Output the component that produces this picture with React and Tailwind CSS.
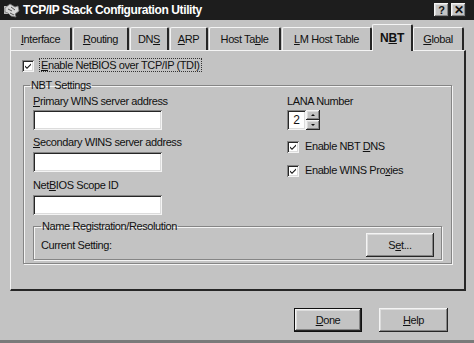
import React from 'react'

const raised = 'shadow-[inset_-1px_-1px_0_#262626,inset_1px_1px_0_#f4f4f4,inset_-2px_-2px_0_#858585,inset_2px_2px_0_#dcdcdc]'
const sunken = 'shadow-[inset_1px_1px_0_#858585,inset_-1px_-1px_0_#f4f4f4,inset_2px_2px_0_#262626,inset_-2px_-2px_0_#dcdcdc]'

function U({ children }) {
  return <span className="underline underline-offset-[1px]">{children}</span>
}

function Tab({ w, active, children }) {
  if (active) {
    return (
      <div className={`relative z-10 -mb-[1px] ml-[-1px] mr-[-1px] h-[27px] ${w} flex items-center justify-center bg-[#c3c3c3] border-l border-t border-[#f4f4f4] border-r-2 border-r-[#262626] rounded-t-[2px] font-bold text-[12px] tracking-[-0.2px]`}>
        {children}
      </div>
    )
  }
  return (
    <div className={`h-[23px] ${w} flex items-center justify-center border-l border-t border-[#f4f4f4] border-r-2 border-r-[#262626] rounded-t-[2px]`}>
      {children}
    </div>
  )
}

function Check({ children, className = '' }) {
  return (
    <div className={`flex items-center gap-[6px] whitespace-nowrap ${className}`}>
      <div className={`w-[12px] h-[12px] shrink-0 bg-white ${sunken} flex items-center justify-center`}>
        <svg width="8" height="8" viewBox="0 0 8 8">
          <path d="M1 3.5 L3 5.5 L7 1.5 L7 3 L3 7 L1 5 Z" fill="#111" />
        </svg>
      </div>
      <span>{children}</span>
    </div>
  )
}

function Field() {
  return <div className={`w-[129px] h-[20px] bg-white ${sunken}`}></div>
}

function Btn({ children, def, className = '' }) {
  return (
    <div className={`h-[24px] flex items-center justify-center bg-[#c3c3c3] ${def ? 'border border-[#111]' : ''} ${raised} ${className}`}>
      {children}
    </div>
  )
}

export default function App() {
  return (
    <div className="w-[474px] h-[343px] bg-[#c3c3c3] font-['Liberation_Sans',Arial,sans-serif] text-[11px] tracking-[-0.4px] text-[#111] overflow-hidden flex flex-col leading-[13px]">
      {/* title bar */}
      <div className="h-[20px] bg-[#1d1d1d] flex items-center pl-[3px] pr-[8px] shrink-0">
        <svg width="17" height="15" viewBox="0 0 17 15">
          <rect x="1" y="3" width="9" height="8" fill="#bbb" />
          <path d="M2 5 L7 1 L12 4 L15 3 L16 8 L12 11 L13 14 L8 13 L5 10 L2 9 Z" fill="#d8d8d8" stroke="#777" strokeWidth="0.8" />
          <path d="M5 6 L9 8 M8 4 L12 7 M7 10 L11 12" stroke="#555" strokeWidth="1" />
        </svg>
        <span className="ml-[3px] text-white font-bold text-[12px] tracking-[-0.4px]">TCP/IP Stack Configuration Utility</span>
        <div className="ml-auto flex gap-[2px] tracking-normal">
          <div className={`w-[15px] h-[14px] bg-[#c3c3c3] ${raised} flex items-center justify-center font-bold text-[11px]`}>?</div>
          <div className={`w-[15px] h-[14px] bg-[#c3c3c3] ${raised} flex items-center justify-center font-bold text-[12px]`}>✕</div>
        </div>
      </div>

      {/* tabs */}
      <div className="h-[30px] flex items-end pl-[10px] gap-[1px] shrink-0 whitespace-nowrap">
        <Tab w="w-[62px]"><span><U>I</U>nterface</span></Tab>
        <Tab w="w-[56px]"><span><U>R</U>outing</span></Tab>
        <Tab w="w-[39px]"><span>DN<U>S</U></span></Tab>
        <Tab w="w-[38px]"><span><U>A</U>RP</span></Tab>
        <Tab w="w-[72px]"><span>Host Ta<U>b</U>le</span></Tab>
        <Tab w="w-[90px]"><span><U>L</U>M Host Table</span></Tab>
        <Tab w="w-[41px]" active><span>N<U>B</U>T</span></Tab>
        <Tab w="w-[51px]"><span><U>G</U>lobal</span></Tab>
      </div>

      {/* panel */}
      <div className="ml-[10px] w-[456px] h-[241px] shrink-0 border-l border-t border-[#f4f4f4] border-r-2 border-b-2 border-r-[#262626] border-b-[#262626] pt-[8px] px-[11px] whitespace-nowrap">
        <Check className="h-[13px]">
          <span className="outline outline-1 outline-dotted outline-[#333] px-[1px]"><U>E</U>nable NetBIOS over TCP/IP (TDI)</span>
        </Check>

        <fieldset className="mt-[7px] h-[185px] ml-[1px] mr-[1px] border border-[#858585] shadow-[1px_1px_0_#f4f4f4,inset_1px_1px_0_#f4f4f4] px-[9px]">
          <legend className="ml-[-3px] px-[1px]">NBT Settings</legend>
          <div className="flex pt-[3px]">
            <div className="w-[130px] flex flex-col">
              <span><U>P</U>rimary WINS server address</span>
              <div className="mt-[2px]"><Field /></div>
              <span className="mt-[6px]"><U>S</U>econdary WINS server address</span>
              <div className="mt-[3px]"><Field /></div>
              <span className="mt-[7px]">Net<U>B</U>IOS Scope ID</span>
              <div className="mt-[3px]"><Field /></div>
            </div>
            <div className="ml-[124px] flex flex-col">
              <span>LANA Number</span>
              <div className="mt-[2px] flex h-[20px]">
                <div className={`w-[19px] h-[20px] bg-white ${sunken} flex items-center justify-center text-[12px]`}>2</div>
                <div className="flex flex-col">
                  <div className={`w-[14px] h-[10px] bg-[#c3c3c3] ${raised} flex items-center justify-center`}>
                    <svg width="4" height="2" viewBox="0 0 4 2"><path d="M2 0 L4 2 L0 2 Z" fill="#111" /></svg>
                  </div>
                  <div className={`w-[14px] h-[10px] bg-[#c3c3c3] ${raised} flex items-center justify-center`}>
                    <svg width="4" height="2" viewBox="0 0 4 2"><path d="M0 0 L4 0 L2 2 Z" fill="#111" /></svg>
                  </div>
                </div>
              </div>
              <Check className="mt-[10px]">Enable NBT <U>D</U>NS</Check>
              <Check className="mt-[11px]">Enable WINS Pro<U>x</U>ies</Check>
            </div>
          </div>

          <fieldset className="mt-[5px] h-[40px] border border-[#858585] shadow-[1px_1px_0_#f4f4f4,inset_1px_1px_0_#f4f4f4] pl-[7px] pr-[7px]">
            <legend className="px-[1px]">Name Registration/Resolution</legend>
            <div className="flex items-center">
              <span>Current Setting:</span>
              <Btn className="ml-auto w-[68px] h-[23px]">S<U>e</U>t...</Btn>
            </div>
          </fieldset>
        </fieldset>
      </div>

      {/* buttons */}
      <div className="flex justify-end gap-[17px] pr-[26px] mt-[17px] shrink-0">
        <Btn def className="w-[68px]"><span><U>D</U>one</span></Btn>
        <Btn className="w-[69px]"><span><U>H</U>elp</span></Btn>
      </div>

      <div className="mt-auto h-[3px] bg-[#7a7a7a] shrink-0"></div>
    </div>
  )
}
